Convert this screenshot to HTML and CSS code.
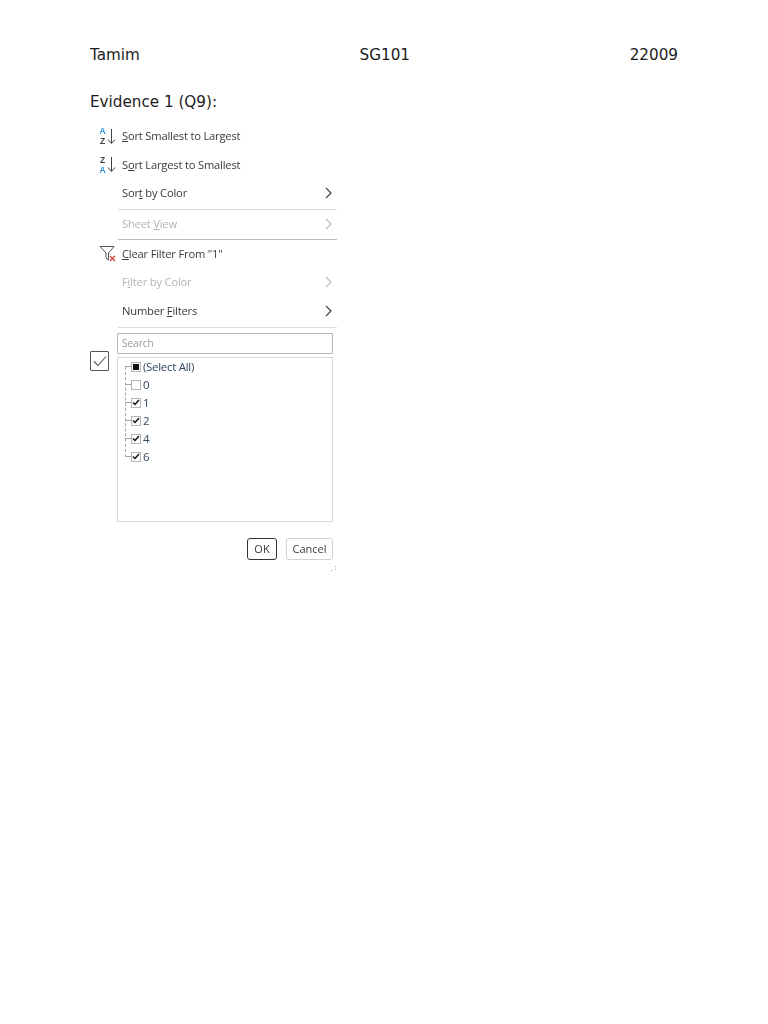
FILE: index.html
```html
<!DOCTYPE html>
<html lang="en">
<head>
<meta charset="utf-8">
<title>Evidence 1 (Q9)</title>
<link rel="stylesheet" href="styles.css">
</head>
<body>
<main class="page">
  <header class="doc-head">
    <span>Tamim</span>
    <span>SG101</span>
    <span>22009</span>
  </header>
  <h1 class="evidence">Evidence 1 (Q9):</h1>
  <section class="shot">
    <div class="menu">
      <div class="row">
        <span class="sort-icon"><span class="letters"><b class="blue">A</b><b class="dark">Z</b></span><svg class="arrow" width="9" height="17" viewBox="0 0 9 17"><path d="M4.5 1V15M1 11.500L4.500 15.500L8 11.500" fill="none" stroke="#444" stroke-width="1"/></svg></span>
        <span class="label"><u>S</u>ort Smallest to Largest</span>
      </div>
      <div class="row">
        <span class="sort-icon"><span class="letters"><b class="dark">Z</b><b class="blue">A</b></span><svg class="arrow" width="9" height="17" viewBox="0 0 9 17"><path d="M4.5 1V15M1 11.500L4.500 15.500L8 11.500" fill="none" stroke="#444" stroke-width="1"/></svg></span>
        <span class="label">S<u>o</u>rt Largest to Smallest</span>
      </div>
      <div class="row">
        <span class="sort-icon"></span>
        <span class="label">Sor<u>t</u> by Color</span>
        <svg class="chev" width="7" height="12" viewBox="0 0 7 12"><path d="M1 1L6 6L1 11" fill="none" stroke="#444" stroke-width="1.200"/></svg>
      </div>
      <hr class="sep sep-a">
      <div class="row row-short off">
        <span class="sort-icon"></span>
        <span class="label">Sheet <u>V</u>iew</span>
        <svg class="chev" width="7" height="12" viewBox="0 0 7 12"><path d="M1 1L6 6L1 11" fill="none" stroke="#bbb" stroke-width="1.200"/></svg>
      </div>
      <hr class="sep sep-b">
      <div class="row">
        <span class="sort-icon"><svg class="funnel" width="18" height="17" viewBox="0 0 18 17"><path d="M1 1.500H15L9.500 8V15L7 13V8Z" fill="none" stroke="#555" stroke-width="1"/><path d="M11 11L16 16M16 11L11 16" stroke="#d9423a" stroke-width="1.300"/></svg></span>
        <span class="label"><u>C</u>lear Filter From "1"</span>
      </div>
      <div class="row off">
        <span class="sort-icon"></span>
        <span class="label">F<u>i</u>lter by Color</span>
        <svg class="chev" width="7" height="12" viewBox="0 0 7 12"><path d="M1 1L6 6L1 11" fill="none" stroke="#bbb" stroke-width="1.200"/></svg>
      </div>
      <div class="row">
        <span class="sort-icon"></span>
        <span class="label">Number <u>F</u>ilters</span>
        <svg class="chev" width="7" height="12" viewBox="0 0 7 12"><path d="M1 1L6 6L1 11" fill="none" stroke="#444" stroke-width="1.200"/></svg>
      </div>
      <hr class="sep sep-a">
    </div>
    <div class="filter">
      <div class="big-check"><svg width="14" height="12" viewBox="0 0 14 12"><path d="M1 6.500L5 10.500L13 1.500" fill="none" stroke="#555" stroke-width="1.100"/></svg></div>
      <div class="filter-main">
        <div class="search">Search</div>
        <div class="tree">
          <span class="rail"></span>
          <div class="item"><span class="tick"></span><span class="box"><i class="mixed"></i></span><span class="name">(Select All)</span></div>
          <div class="item"><span class="tick"></span><span class="box"></span><span class="name">0</span></div>
          <div class="item"><span class="tick"></span><span class="box"><svg width="8" height="7" viewBox="0 0 8 7"><path d="M1 3.500L3 5.500L7 1" fill="none" stroke="#111" stroke-width="1.500"/></svg></span><span class="name">1</span></div>
          <div class="item"><span class="tick"></span><span class="box"><svg width="8" height="7" viewBox="0 0 8 7"><path d="M1 3.500L3 5.500L7 1" fill="none" stroke="#111" stroke-width="1.500"/></svg></span><span class="name">2</span></div>
          <div class="item"><span class="tick"></span><span class="box"><svg width="8" height="7" viewBox="0 0 8 7"><path d="M1 3.500L3 5.500L7 1" fill="none" stroke="#111" stroke-width="1.500"/></svg></span><span class="name">4</span></div>
          <div class="item"><span class="tick"></span><span class="box"><svg width="8" height="7" viewBox="0 0 8 7"><path d="M1 3.500L3 5.500L7 1" fill="none" stroke="#111" stroke-width="1.500"/></svg></span><span class="name">6</span></div>
        </div>
        <div class="buttons">
          <span class="btn btn-ok">OK</span>
          <span class="btn btn-cancel">Cancel</span>
        </div>
      </div>
    </div>
    <div class="grip"><svg width="7" height="7" viewBox="0 0 7 7"><path d="M5.500 1V2M5.500 4V5M1 5.500H2" stroke="#aaa" stroke-width="1"/></svg></div>
  </section>
</main>
</body>
</html>
```

FILE: styles.css
```css
html, body {
  margin: 0;
  padding: 0;
  background: #fff;
}

.page {
  box-sizing: border-box;
  width: 768px;
  height: 1024px;
  padding: 45px 90px 0;
  font-family: "DejaVu Sans", sans-serif;
  font-size: 15.200px;
  line-height: 20px;
  color: #1c1c1c;
}

.doc-head {
  display: flex;
  justify-content: space-between;
}

.evidence {
  margin: 26px 0 0;
  font-size: 15.200px;
  font-weight: 400;
  line-height: 22px;
}

.shot {
  width: 247px;
  margin-top: 9px;
  font-family: "Open Sans", sans-serif;
  font-size: 11.200px;
  color: #3a3a3a;
  filter: blur(0.45px);
}

.row {
  display: flex;
  align-items: center;
  height: 28.5px;
  padding-right: 5px;
  line-height: 14px;
}

.row-short {
  height: 28px;
}

.off {
  color: #b4b4b4;
}

.sort-icon {
  display: flex;
  align-items: center;
  width: 32px;
  flex: none;
  padding-left: 8px;
  box-sizing: border-box;
}

.funnel {
  margin-left: 1px;
}

.letters {
  display: flex;
  flex-direction: column;
  width: 9px;
  font-family: "Liberation Sans", sans-serif;
  font-size: 8.500px;
  line-height: 10px;
  text-align: center;
}

.letters b {
  font-weight: 700;
}

.blue {
  color: #2f8fd6;
}

.dark {
  color: #444;
}

.label {
  flex: 1;
  white-space: nowrap;
  letter-spacing: -0.2px;
}

.label u {
  text-underline-offset: 1px;
}

.sep {
  height: 1px;
  margin: 0 0 0 28px;
  border: 0;
  background: #dcdcdc;
}

.sep-a {
  margin-top: 1.500px;
}

.sep-b {
  background: #bdbdbd;
  margin-top: 0.500px;
}

.filter {
  display: flex;
  margin-top: 5px;
}

.big-check {
  box-sizing: border-box;
  display: flex;
  align-items: center;
  justify-content: center;
  flex: none;
  width: 19px;
  height: 20px;
  margin: 18px 8px 0 0;
  border: 1px solid #555;
  border-radius: 1px;
}

.filter-main {
  width: 216px;
}

.search {
  box-sizing: border-box;
  height: 21px;
  padding-left: 4px;
  border: 1px solid #b5b5b5;
  border-radius: 1px;
  color: #999;
  font-size: 10px;
  line-height: 18px;
}

.tree {
  position: relative;
  box-sizing: border-box;
  height: 165px;
  margin-top: 3px;
  border: 1px solid #d8d8d8;
}

.rail {
  position: absolute;
  left: 7px;
  top: 9px;
  height: 90px;
  border-left: 1px dashed #a5a5a5;
}

.item {
  display: flex;
  align-items: center;
  height: 18px;
}

.tick {
  flex: none;
  width: 6px;
  height: 0;
  margin-left: 7px;
  border-top: 1px dashed #a5a5a5;
}

.box {
  box-sizing: border-box;
  display: flex;
  align-items: center;
  justify-content: center;
  flex: none;
  width: 10px;
  height: 10px;
  border: 1px solid #b5b5b5;
}

.mixed {
  display: block;
  width: 6px;
  height: 6px;
  background: #111;
}

.name {
  margin-left: 2px;
  color: #33475f;
  font-size: 11.500px;
  letter-spacing: -0.3px;
}

.buttons {
  display: flex;
  justify-content: flex-end;
  gap: 9px;
  margin-top: 16px;
}

.btn {
  box-sizing: border-box;
  display: flex;
  align-items: center;
  justify-content: center;
  height: 22px;
  border-radius: 3px;
  font-size: 11px;
}

.btn-ok {
  width: 30px;
  border: 1px solid #333;
}

.btn-cancel {
  width: 47px;
  border: 1px solid #d0d0d0;
}

.grip {
  display: flex;
  justify-content: flex-end;
  height: 7px;
  margin-top: 5px;
}
```
